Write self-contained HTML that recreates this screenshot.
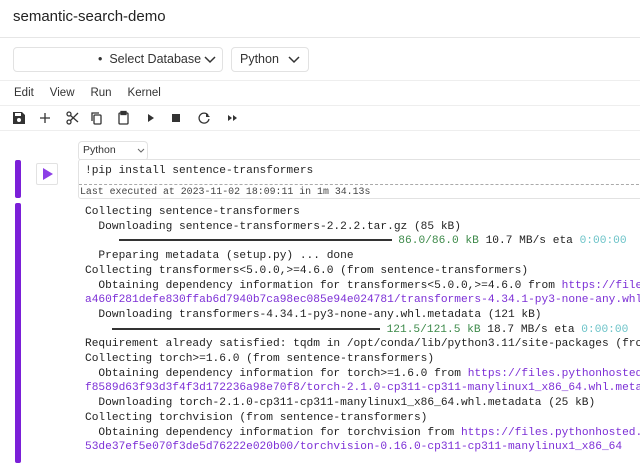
<!DOCTYPE html>
<html><head><style>
body{margin:0;width:640px;height:450px;overflow:hidden;background:#fff;font-family:"Liberation Sans",sans-serif;color:#222;position:relative}
.a{position:absolute}
.box{position:absolute;border:1px solid #e2e2e2;border-radius:4px;background:#fff;box-sizing:border-box}
.mono{font-family:"Liberation Mono",monospace}
.out{position:absolute;left:85px;top:205px;width:555px;overflow:hidden;font-size:11.2px;line-height:14.7px;white-space:pre;color:#222}
.g{color:#3d8a4a}.c{color:#6cc3c8}.p{color:#7c2fd6}
.bar{display:inline-block;height:2px;background:#333;vertical-align:middle}
svg{position:absolute}
</style></head><body>
<div class="a" style="left:13px;top:8px;font-size:15px;color:#222">semantic-search-demo</div>
<div class="a" style="left:0;top:37px;width:640px;height:1px;background:#e6e6e6"></div>
<div class="box" style="left:13px;top:47px;width:210px;height:25px"></div>
<div class="a" style="left:98px;top:52px;font-size:12.5px;color:#333">•&nbsp; Select Database</div>
<svg style="left:204px;top:56px" width="12" height="8"><path d="M1 1l5 5 5-5" fill="none" stroke="#333" stroke-width="1.5"/></svg>
<div class="box" style="left:231px;top:47px;width:78px;height:25px"></div>
<div class="a" style="left:240px;top:52px;font-size:12.5px;color:#333">Python</div>
<svg style="left:288px;top:56px" width="12" height="8"><path d="M1 1l5 5 5-5" fill="none" stroke="#333" stroke-width="1.5"/></svg>
<div class="a" style="left:0;top:80px;width:640px;height:1px;background:#eee"></div>
<div class="a" style="left:14px;top:87px;font-size:11.5px;color:#333">Edit&nbsp;&nbsp;&nbsp;&nbsp;&nbsp;View&nbsp;&nbsp;&nbsp;&nbsp;&nbsp;Run&nbsp;&nbsp;&nbsp;&nbsp;&nbsp;Kernel</div>
<div class="a" style="left:0;top:105px;width:640px;height:1px;background:#eee"></div>
<svg style="left:12px;top:110px" width="230" height="16" fill="#333">
<path d="M1 2h9l3 3v9H1z M3 3v3h6V3z" fill-rule="evenodd"/><circle cx="7" cy="10" r="2" fill="#fff"/>
<path d="M33 3v10M28 8h10" stroke="#333" stroke-width="1.3"/>
<g fill="none" stroke="#333" stroke-width="1.3"><circle cx="57" cy="4" r="2"/><circle cx="57" cy="12" r="2"/><path d="M58.5 5.5L66 12M58.5 10.5L66 3"/>
<rect x="82" y="5" width="7" height="9" rx="1"/><path d="M80 11V3h7"/>
<rect x="107" y="3" width="9" height="11" rx="1"/><rect x="109" y="1.5" width="5" height="3" fill="#333"/>
<path d="M196 5a5 5 0 1 0 1 4"/></g>
<path d="M136 4l6 4-6 4z"/><rect x="160" y="4" width="8" height="8"/>
<path d="M194 3v4h4z"/><path d="M216 5l4 3-4 3zM221 5l4 3-4 3z"/>
</svg>
<div class="a" style="left:0;top:130px;width:640px;height:1px;background:#eee"></div>
<div class="box" style="left:78px;top:141px;width:70px;height:20px"></div>
<div class="a" style="left:83px;top:144px;font-size:10.5px;color:#333">Python</div>
<svg style="left:137px;top:148px" width="8" height="6"><path d="M1 1l3 3 3-3" fill="none" stroke="#666"/></svg>
<div class="a" style="left:15px;top:160px;width:6px;height:38px;background:#7b1fd8;border-radius:2px"></div>
<div class="box" style="left:36px;top:163px;width:22px;height:22px;border-radius:2px"></div>
<svg style="left:42px;top:168px" width="12" height="12"><path d="M1 0l10 6-10 6z" fill="#8c3fe6"/></svg>
<div class="box" style="left:78px;top:159px;width:580px;height:40px;border-radius:3px"></div>
<div class="a mono" style="left:85px;top:165px;font-size:11.2px">!pip install sentence-transformers</div>
<div class="a" style="left:79px;top:184px;width:570px;border-top:1px dashed #aaa"></div>
<div class="a mono" style="left:80px;top:186px;font-size:9.9px;color:#444">Last executed at 2023-11-02 18:09:11 in 1m 34.13s</div>
<div class="a" style="left:15px;top:203px;width:6px;height:260px;background:#7b1fd8;border-radius:2px"></div>
<div class="out mono">Collecting sentence-transformers
  Downloading sentence-transformers-2.2.2.tar.gz (85 kB)
     <span class="bar" style="width:273px"></span> <span class="g">86.0/86.0 kB</span> 10.7 MB/s eta <span class="c">0:00:00</span>
  Preparing metadata (setup.py) ... done
Collecting transformers&lt;5.0.0,&gt;=4.6.0 (from sentence-transformers)
  Obtaining dependency information for transformers&lt;5.0.0,&gt;=4.6.0 from <span class="p">https://files.pythonhosted.org/packages/</span>
<span class="p">a460f281defe830ffab6d7940b7ca98ec085e94e024781/transformers-4.34.1-py3-none-any.whl.metadata</span>
  Downloading transformers-4.34.1-py3-none-any.whl.metadata (121 kB)
    <span class="bar" style="width:268px"></span> <span class="g">121.5/121.5 kB</span> 18.7 MB/s eta <span class="c">0:00:00</span>
Requirement already satisfied: tqdm in /opt/conda/lib/python3.11/site-packages (from
Collecting torch&gt;=1.6.0 (from sentence-transformers)
  Obtaining dependency information for torch&gt;=1.6.0 from <span class="p">https://files.pythonhosted.org/packages</span>
<span class="p">f8589d63f93d3f4f3d172236a98e70f8/torch-2.1.0-cp311-cp311-manylinux1_x86_64.whl.metadata</span>
  Downloading torch-2.1.0-cp311-cp311-manylinux1_x86_64.whl.metadata (25 kB)
Collecting torchvision (from sentence-transformers)
  Obtaining dependency information for torchvision from <span class="p">https://files.pythonhosted.org/packages</span>
<span class="p">53de37ef5e070f3de5d76222e020b00/torchvision-0.16.0-cp311-cp311-manylinux1_x86_64</span></div>
</body></html>
